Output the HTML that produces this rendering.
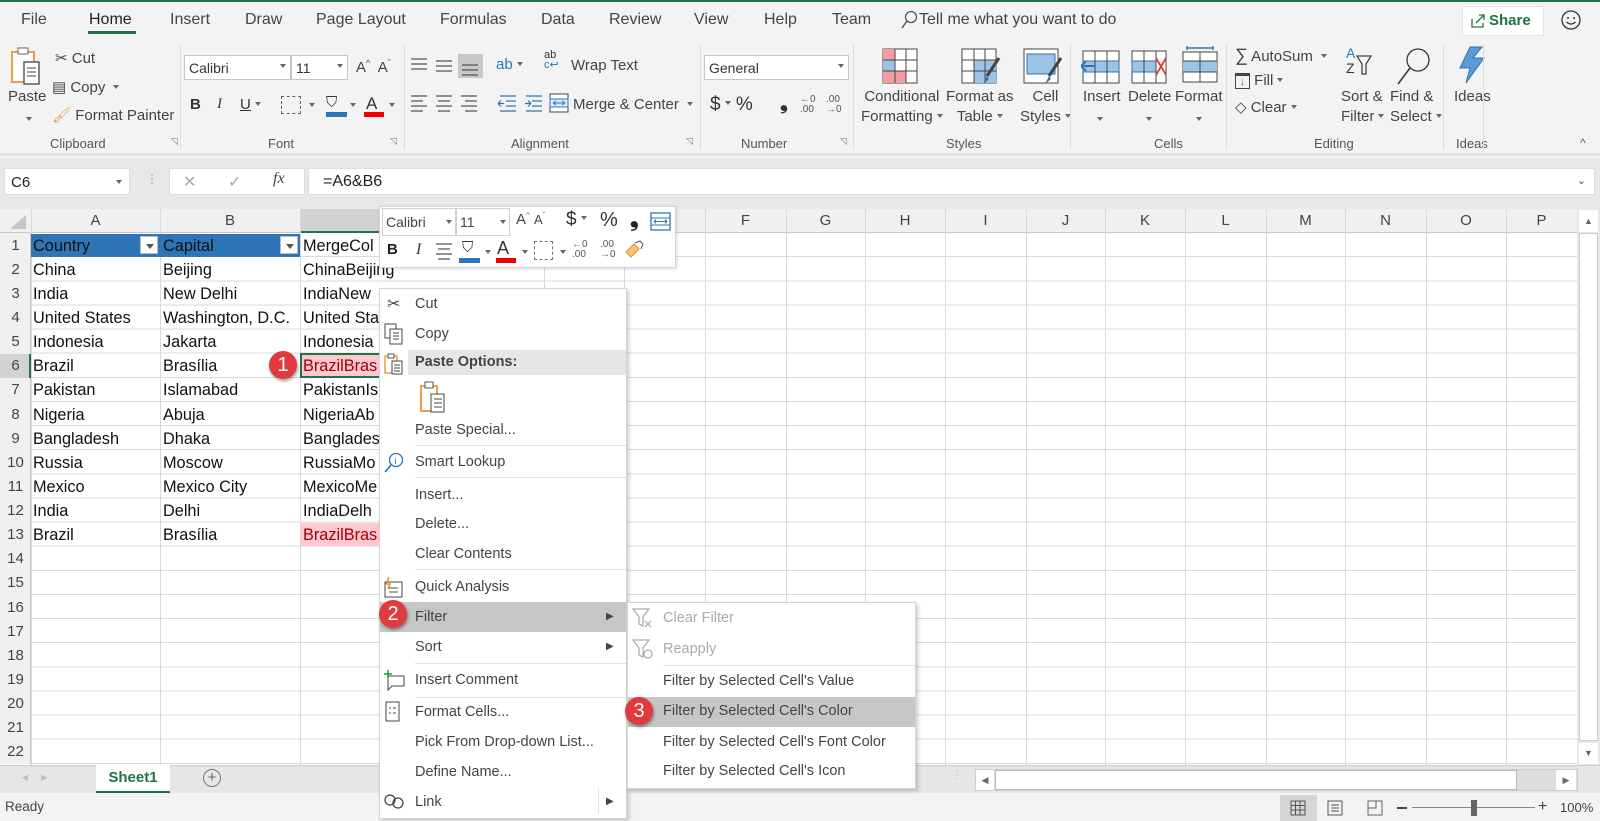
<!DOCTYPE html>
<html><head><meta charset="utf-8"><style>
*{box-sizing:border-box;margin:0;padding:0}
body{width:1600px;height:821px;overflow:hidden;background:#e8e8e8;font-family:"Liberation Sans",sans-serif;position:relative;color:#444}
.a{position:absolute;white-space:nowrap}
.rb{font-size:14px;color:#444}
.gl{font-size:13px;color:#555}
.vl{position:absolute;top:209px;height:556px;width:1px;background:#d9d9d9}
.c{position:absolute;font-size:16.3px;color:#111;white-space:nowrap;line-height:24px}
.rh{position:absolute;left:0;width:31px;text-align:center;font-size:15px;color:#444;line-height:24px}
.ch{position:absolute;top:209px;height:24px;line-height:24px;text-align:center;font-size:15px;color:#444}
.mi{position:absolute;left:415px;font-size:14.5px;color:#444;line-height:20px}
.si{position:absolute;left:663px;font-size:14.5px;color:#444;line-height:20px}
.sep{position:absolute;height:1px;background:#e1e1e1}
.bd{position:absolute;width:28px;height:28px;border-radius:50%;background:#e0393e;color:#fff;font-size:20px;text-align:center;line-height:28px;box-shadow:1px 2px 3px rgba(0,0,0,.4)}
.dd{position:absolute;width:18px;height:18px;background:#fff;border:1px solid #bbb}
.dd:after{content:"";position:absolute;left:5px;top:7px;border:4px solid transparent;border-top:5px solid #555}
.car{display:inline-block;border:3px solid transparent;border-top:4px solid #666;vertical-align:middle;margin-left:4px}
.sv{position:absolute}
.tb{font-size:16px}
</style></head><body>
<div class="a" style="left:0;top:0;width:1600px;height:158px;background:#f3f3f3"></div>
<div class="a" style="left:0;top:0;width:1600px;height:2px;background:#217346"></div>
<div class="a" style="left:0;top:153px;width:1600px;height:3px;background:linear-gradient(#ddd,#e8e8e8)"></div>
<div class="a rb tb" style="top:11px;left:21px">File</div>
<div class="a rb tb" style="top:11px;left:89px;color:#222">Home</div>
<div class="a" style="top:31px;left:88px;width:48px;height:3px;background:#217346"></div>
<div class="a rb tb" style="top:11px;left:170px">Insert</div>
<div class="a rb tb" style="top:11px;left:245px">Draw</div>
<div class="a rb tb" style="top:11px;left:316px">Page Layout</div>
<div class="a rb tb" style="top:11px;left:440px">Formulas</div>
<div class="a rb tb" style="top:11px;left:541px">Data</div>
<div class="a rb tb" style="top:11px;left:609px">Review</div>
<div class="a rb tb" style="top:11px;left:694px">View</div>
<div class="a rb tb" style="top:11px;left:764px">Help</div>
<div class="a rb tb" style="top:11px;left:832px">Team</div>
<svg class="sv" style="left:900px;top:10px" width="18" height="20"><circle cx="11" cy="7" r="5.5" fill="none" stroke="#555" stroke-width="1.3"/><line x1="7" y1="11" x2="2" y2="18" stroke="#555" stroke-width="1.5"/></svg>
<div class="a rb tb" style="top:11px;left:919px">Tell me what you want to do</div>
<div class="a" style="left:1462px;top:6px;width:82px;height:30px;background:#fff;border:1px solid #e3e3e3"></div>
<svg class="sv" style="left:1470px;top:13px" width="16" height="16"><path d="M2 6v8h11v-4M6 10l8-8M9 2h5v5" fill="none" stroke="#217346" stroke-width="1.3"/></svg>
<div class="a" style="top:12px;left:1489px;font-size:15px;font-weight:bold;color:#217346">Share</div>
<svg class="sv" style="left:1560px;top:9px" width="22" height="22"><circle cx="11" cy="11" r="9" fill="none" stroke="#333" stroke-width="1.3"/><circle cx="8" cy="9" r="1" fill="#333"/><circle cx="14" cy="9" r="1" fill="#333"/><path d="M6.5 13q4.5 4 9 0" fill="none" stroke="#333" stroke-width="1.2"/></svg>

<svg class="sv" style="left:10px;top:46px" width="36" height="42"><rect x="2" y="6" width="22" height="30" fill="#fff" stroke="#e8a04a" stroke-width="2"/><rect x="8" y="2" width="10" height="6" fill="#fff" stroke="#666"/><rect x="14" y="16" width="15" height="22" fill="#fff" stroke="#444" stroke-width="1.3"/><path d="M17 22h9M17 26h9M17 30h9" stroke="#444"/></svg>
<div class="a rb" style="left:8px;top:88px;font-size:15px">Paste</div>
<div class="a" style="left:22px;top:112px"><span class="car"></span></div>
<div class="a rb" style="left:55px;top:49px;font-size:15px">✂&nbsp;Cut</div>
<div class="a rb" style="left:52px;top:78px;font-size:15px">▤ Copy<span class="car" style="margin-left:8px"></span></div>
<div class="a rb" style="left:52px;top:106px;font-size:15px"><span style="color:#e8a04a">🖌</span> Format Painter</div>
<div class="a gl" style="left:50px;top:136px">Clipboard</div>
<div class="a" style="left:171px;top:136px;font-size:9px;color:#777">◹</div>
<div class="a" style="left:180px;top:44px;width:1px;height:106px;background:#ddd"></div>
<div class="a" style="left:184px;top:55px;width:107px;height:25px;background:#fff;border:1px solid #c6c6c6;font-size:14px;padding:4px 4px;color:#333">Calibri<span class="car" style="position:absolute;right:4px;top:8px"></span></div>
<div class="a" style="left:291px;top:55px;width:57px;height:25px;background:#fff;border:1px solid #c6c6c6;font-size:14px;padding:4px 4px;color:#333">11<span class="car" style="position:absolute;right:4px;top:8px"></span></div>
<div class="a rb" style="left:356px;top:58px;font-size:15px">A<sup style="font-size:9px">^</sup>&nbsp; A<sup style="font-size:9px">ˇ</sup></div>
<div class="a" style="left:190px;top:96px;font-size:15px;font-weight:bold;color:#333">B</div>
<div class="a" style="left:217px;top:96px;font-size:15px;font-style:italic;font-family:'Liberation Serif';color:#333">I</div>
<div class="a" style="left:240px;top:96px;font-size:15px;text-decoration:underline;color:#333">U<span class="car"></span></div>
<div class="a" style="left:281px;top:96px;width:20px;height:18px;border:1px dashed #666"></div><div class="a" style="left:305px;top:98px"><span class="car"></span></div>
<div class="a" style="left:326px;top:94px;font-size:15px;color:#333">⛉</div><div class="a" style="left:326px;top:112px;width:21px;height:5px;background:#2e75b6"></div><div class="a" style="left:346px;top:98px"><span class="car"></span></div>
<div class="a" style="left:366px;top:94px;font-size:17px;color:#333">A</div><div class="a" style="left:364px;top:112px;width:20px;height:5px;background:#e00"></div><div class="a" style="left:385px;top:98px"><span class="car"></span></div>
<div class="a gl" style="left:268px;top:136px">Font</div>
<div class="a" style="left:390px;top:136px;font-size:9px;color:#777">◹</div>
<div class="a" style="left:404px;top:44px;width:1px;height:106px;background:#ddd"></div>
<svg class="sv" style="left:408px;top:54px" width="80" height="24"><path d="M3 5h16M3 10h16M3 15h16M28 7h16M28 12h16M28 17h16" stroke="#555" stroke-width="1.3"/><rect x="50" y="0" width="25" height="24" fill="#c8c8c8"/><path d="M54 11h16M54 16h16M54 21h16" stroke="#555" stroke-width="1.3"/></svg>
<svg class="sv" style="left:408px;top:93px" width="160" height="22"><path d="M3 3h16M3 8h12M3 13h16M3 18h12M28 3h16M30 8h12M28 13h16M30 18h12M53 3h16M57 8h12M53 13h16M57 18h12" stroke="#555" stroke-width="1.3"/><path d="M92 3h16M98 8h10M98 13h10M92 18h16M90 10.5h6M90 10.5l3-3M90 10.5l3 3" stroke="#2e75b6" stroke-width="1.2" fill="none"/><path d="M118 3h16M124 8h10M124 13h10M118 18h16M117 10.5h6M123 10.5l-3-3M123 10.5l-3 3" stroke="#2e75b6" stroke-width="1.2" fill="none"/></svg>
<div class="a" style="left:496px;top:56px;font-size:15px;color:#2e75b6">ab<span class="car"></span></div>
<div class="a" style="left:544px;top:50px;font-size:11px;color:#333;line-height:10px">ab<br><span style="color:#2e75b6">c↩</span></div>
<div class="a rb" style="left:571px;top:57px;font-size:15px">Wrap Text</div>
<svg class="sv" style="left:549px;top:93px" width="20" height="20"><rect x="1" y="1" width="18" height="18" fill="#fff" stroke="#444"/><rect x="1" y="6" width="18" height="8" fill="#dce9f7" stroke="#2e75b6"/><path d="M4 10h12M4 10l3-2M4 10l3 2M16 10l-3-2M16 10l-3 2" stroke="#2e75b6"/></svg>
<div class="a rb" style="left:573px;top:96px;font-size:15px">Merge &amp; Center<span class="car" style="margin-left:8px"></span></div>
<div class="a gl" style="left:511px;top:136px">Alignment</div>
<div class="a" style="left:686px;top:136px;font-size:9px;color:#777">◹</div>
<div class="a" style="left:700px;top:44px;width:1px;height:106px;background:#ddd"></div>
<div class="a" style="left:704px;top:55px;width:145px;height:25px;background:#fff;border:1px solid #c6c6c6;font-size:14px;padding:4px 4px;color:#333">General<span class="car" style="position:absolute;right:4px;top:8px"></span></div>
<div class="a" style="left:710px;top:94px;font-size:19px;color:#333">$<span class="car"></span> %</div>
<div class="a" style="left:780px;top:92px;font-size:20px;font-weight:bold;color:#333">❟</div>
<div class="a" style="left:800px;top:95px;font-size:10px;line-height:10px;color:#2e75b6">←<span style="color:#555">0</span><br><span style="color:#555">.00</span></div>
<div class="a" style="left:826px;top:95px;font-size:10px;line-height:10px;color:#555">.00<br><span style="color:#2e75b6">→</span>0</div>
<div class="a gl" style="left:741px;top:136px">Number</div>
<div class="a" style="left:840px;top:136px;font-size:9px;color:#777">◹</div>
<div class="a" style="left:853px;top:44px;width:1px;height:106px;background:#ddd"></div>
<svg class="sv" style="left:882px;top:48px" width="36" height="36"><rect x="1" y="1" width="34" height="34" fill="#fff" stroke="#444"/><rect x="1" y="1" width="12" height="11" fill="#f59ca2"/><rect x="1" y="23" width="23" height="12" fill="#f59ca2"/><rect x="1" y="12" width="12" height="11" fill="#9cc3e6"/><path d="M1 12h34M1 23h34M13 1v34M24 1v34" stroke="#444"/></svg>
<svg class="sv" style="left:961px;top:48px" width="40" height="40"><rect x="1" y="1" width="34" height="34" fill="#fff" stroke="#444"/><rect x="13" y="12" width="22" height="23" fill="#9cc3e6"/><path d="M1 12h34M1 23h34M13 1v34M24 1v34" stroke="#444"/><path d="M38 10l-12 18" stroke="#444" stroke-width="3"/><path d="M26 28l-4 8 6-5z" fill="#2e75b6"/></svg>
<svg class="sv" style="left:1023px;top:48px" width="40" height="40"><rect x="1" y="1" width="34" height="34" fill="#fff" stroke="#444"/><rect x="4" y="6" width="28" height="20" fill="#9cc3e6" stroke="#2e75b6"/><path d="M38 10l-12 18" stroke="#444" stroke-width="3"/><path d="M26 28l-4 8 6-5z" fill="#2e75b6"/></svg>
<div class="a rb" style="left:861px;top:87px;font-size:15px;text-align:center;line-height:20px">Conditional<br>Formatting<span class="car"></span></div>
<div class="a rb" style="left:946px;top:87px;font-size:15px;text-align:center;line-height:20px">Format as<br>Table<span class="car"></span></div>
<div class="a rb" style="left:1020px;top:87px;font-size:15px;text-align:center;line-height:20px">Cell<br>Styles<span class="car"></span></div>
<div class="a gl" style="left:946px;top:136px">Styles</div>
<div class="a" style="left:1070px;top:44px;width:1px;height:106px;background:#ddd"></div>
<svg class="sv" style="left:1081px;top:50px" width="40" height="34"><rect x="2" y="1" width="36" height="32" fill="#fff" stroke="#444"/><rect x="2" y="11" width="36" height="11" fill="#9cc3e6" stroke="#2e75b6"/><path d="M14 1v32M26 1v32" stroke="#444"/><path d="M0 16h14M5 11l-5 5 5 5" fill="none" stroke="#2e75b6" stroke-width="2"/></svg>
<svg class="sv" style="left:1130px;top:50px" width="40" height="34"><rect x="2" y="1" width="34" height="32" fill="#fff" stroke="#444"/><rect x="2" y="11" width="24" height="11" fill="#9cc3e6" stroke="#2e75b6"/><path d="M14 1v32M26 1v32" stroke="#444"/><path d="M26 8l10 17M36 8l-10 17" stroke="#e0393e" stroke-width="1.8"/></svg>
<svg class="sv" style="left:1181px;top:46px" width="38" height="38"><path d="M6 2h26M6 0v4M32 0v4" stroke="#2e75b6" stroke-width="1.5"/><rect x="2" y="6" width="34" height="30" fill="#fff" stroke="#444"/><rect x="2" y="15" width="34" height="11" fill="#9cc3e6"/><path d="M2 15h34M2 26h34M19 6v30" stroke="#444"/></svg>
<div class="a rb" style="left:1083px;top:88px;font-size:15px">Insert</div><div class="a" style="left:1093px;top:112px"><span class="car"></span></div>
<div class="a rb" style="left:1128px;top:88px;font-size:15px">Delete</div><div class="a" style="left:1142px;top:112px"><span class="car"></span></div>
<div class="a rb" style="left:1175px;top:88px;font-size:15px">Format</div><div class="a" style="left:1192px;top:112px"><span class="car"></span></div>
<div class="a gl" style="left:1154px;top:136px">Cells</div>
<div class="a" style="left:1226px;top:44px;width:1px;height:106px;background:#ddd"></div>
<div class="a rb" style="left:1235px;top:45px;font-size:15px"><span style="font-size:18px">∑</span> AutoSum<span class="car" style="margin-left:8px"></span></div>
<div class="a rb" style="left:1235px;top:72px;font-size:15px"><span style="display:inline-block;width:15px;height:16px;border:1px solid #444;border-top:3px solid #444;color:#2e75b6;font-size:11px;text-align:center;line-height:12px;vertical-align:middle">↓</span> Fill<span class="car"></span></div>
<div class="a rb" style="left:1235px;top:98px;font-size:15px">◇ Clear<span class="car"></span></div>
<div class="a" style="left:1346px;top:46px;font-size:14px;line-height:15px;color:#2e75b6">A<br><span style="color:#333">Z</span></div>
<svg class="sv" style="left:1356px;top:54px" width="16" height="22"><path d="M1 2h14l-5 8v10h-4V10z" fill="none" stroke="#444" stroke-width="1.3"/></svg>
<svg class="sv" style="left:1394px;top:46px" width="40" height="40"><circle cx="24" cy="14" r="11" fill="none" stroke="#333" stroke-width="1.3"/><path d="M16 22L4 38" stroke="#333" stroke-width="1.5"/></svg>
<div class="a rb" style="left:1341px;top:87px;font-size:15px;line-height:20px">Sort &amp;<br>Filter<span class="car"></span></div>
<div class="a rb" style="left:1390px;top:87px;font-size:15px;line-height:20px">Find &amp;<br>Select<span class="car"></span></div>
<div class="a gl" style="left:1314px;top:136px">Editing</div>
<div class="a" style="left:1443px;top:44px;width:1px;height:106px;background:#ddd"></div>
<svg class="sv" style="left:1458px;top:46px" width="28" height="38"><path d="M12 1L2 22h10L8 37 26 12H15L24 1z" fill="#5b9bd5" stroke="#2e75b6"/></svg>
<div class="a rb" style="left:1454px;top:88px;font-size:15px">Ideas</div>
<div class="a gl" style="left:1456px;top:136px">Ideas</div>
<div class="a" style="left:1483px;top:44px;width:1px;height:106px;background:#ddd"></div>
<div class="a" style="left:1580px;top:136px;font-size:12px;color:#555">^</div>

<div class="a" style="left:4px;top:168px;width:126px;height:27px;background:#fff;border:1px solid #ddd;font-size:15px;padding:5px 6px;color:#222">C6<span class="car" style="position:absolute;right:7px;top:11px"></span></div>
<div class="a" style="left:146px;top:172px;font-size:12px;color:#aaa">⋮</div>
<div class="a" style="left:169px;top:168px;width:136px;height:27px;background:#fff;border:1px solid #ddd"></div>
<div class="a" style="left:183px;top:172px;font-size:16px;color:#aaa">✕</div>
<div class="a" style="left:228px;top:172px;font-size:16px;color:#aaa">✓</div>
<div class="a" style="left:273px;top:170px;font-size:16px;font-style:italic;font-family:'Liberation Serif';color:#444">fx</div>
<div class="a" style="left:308px;top:168px;width:1287px;height:27px;background:#fff;border:1px solid #ddd;font-size:16px;padding:4px 14px;color:#222">=A6&amp;B6<span style="position:absolute;right:8px;top:5px;font-size:11px;color:#555">⌄</span></div>

<div class="a" style="left:0;top:209px;width:1577px;height:556px;background:#fff"></div>
<div class="a" style="left:0;top:209px;width:1577px;height:24px;background:#f0f0f0;border-bottom:1px solid #c8c8c8"></div>
<div class="a" style="left:0;top:233px;width:31px;height:531px;background:#f0f0f0;border-right:1px solid #c8c8c8"></div>
<div class="a" style="left:31px;top:233px;width:1546px;height:531px;background:repeating-linear-gradient(to bottom,transparent 0,transparent 23.13px,#dadada 23.13px,#dadada 24.13px)"></div>
<svg class="sv" style="left:6px;top:213px" width="22" height="18"><path d="M20 2V16H4z" fill="#c6c6c6"/></svg>
<div class="a" style="left:300px;top:209px;width:244px;height:24px;background:#d2d2d2;border-bottom:2px solid #217346"></div>
<div class="a" style="left:0;top:354px;width:31px;height:24px;background:#d2d2d2;border-right:2px solid #217346"></div>
<div class="vl" style="left:31px"></div><div class="vl" style="left:160px"></div><div class="vl" style="left:300px"></div><div class="vl" style="left:544px"></div><div class="vl" style="left:624px"></div><div class="vl" style="left:705px"></div><div class="vl" style="left:786px"></div><div class="vl" style="left:865px"></div><div class="vl" style="left:945px"></div><div class="vl" style="left:1026px"></div><div class="vl" style="left:1105px"></div><div class="vl" style="left:1185px"></div><div class="vl" style="left:1266px"></div><div class="vl" style="left:1345px"></div><div class="vl" style="left:1426px"></div><div class="vl" style="left:1506px"></div>
<div class="ch" style="left:31px;width:129px">A</div><div class="ch" style="left:160px;width:140px">B</div><div class="ch" style="left:544px;width:80px">D</div><div class="ch" style="left:624px;width:81px">E</div><div class="ch" style="left:705px;width:81px">F</div><div class="ch" style="left:786px;width:79px">G</div><div class="ch" style="left:865px;width:80px">H</div><div class="ch" style="left:945px;width:81px">I</div><div class="ch" style="left:1026px;width:79px">J</div><div class="ch" style="left:1105px;width:80px">K</div><div class="ch" style="left:1185px;width:81px">L</div><div class="ch" style="left:1266px;width:79px">M</div><div class="ch" style="left:1345px;width:81px">N</div><div class="ch" style="left:1426px;width:80px">O</div><div class="ch" style="left:1506px;width:71px">P</div>
<div class="rh" style="top:233.6px">1</div><div class="rh" style="top:257.7px">2</div><div class="rh" style="top:281.9px">3</div><div class="rh" style="top:306px">4</div><div class="rh" style="top:330.1px">5</div><div class="rh" style="top:354.3px">6</div><div class="rh" style="top:378.4px">7</div><div class="rh" style="top:402.5px">8</div><div class="rh" style="top:426.6px">9</div><div class="rh" style="top:450.8px">10</div><div class="rh" style="top:474.9px">11</div><div class="rh" style="top:499px">12</div><div class="rh" style="top:523.2px">13</div><div class="rh" style="top:547.3px">14</div><div class="rh" style="top:571.4px">15</div><div class="rh" style="top:595.6px">16</div><div class="rh" style="top:619.7px">17</div><div class="rh" style="top:643.8px">18</div><div class="rh" style="top:668px">19</div><div class="rh" style="top:692.1px">20</div><div class="rh" style="top:716.2px">21</div><div class="rh" style="top:740.4px">22</div>
<div class="a" style="left:31px;top:233.6px;width:269px;height:23px;background:#2e75b6"></div>
<div class="dd" style="left:140px;top:236px"></div><div class="dd" style="left:280px;top:236px"></div>
<div class="a" style="left:300px;top:354.3px;width:244px;height:23px;background:#ffc7ce"></div>
<div class="a" style="left:300px;top:523.2px;width:244px;height:23px;background:#ffc7ce"></div>
<div class="a" style="left:300px;top:353.3px;width:90px;height:25px;border:2px solid #217346"></div>
<div class="c" style="left:33px;top:233.6px">Country</div><div class="c" style="left:163px;top:233.6px">Capital</div><div class="c" style="left:303px;top:233.6px">MergeCol</div>
<div class="c" style="left:33px;top:257.7px">China</div><div class="c" style="left:163px;top:257.7px">Beijing</div><div class="c" style="left:303px;top:257.7px">ChinaBeijing</div>
<div class="c" style="left:33px;top:281.9px">India</div><div class="c" style="left:163px;top:281.9px">New Delhi</div><div class="c" style="left:303px;top:281.9px">IndiaNew</div>
<div class="c" style="left:33px;top:306px">United States</div><div class="c" style="left:163px;top:306px">Washington, D.C.</div><div class="c" style="left:303px;top:306px">United Sta</div>
<div class="c" style="left:33px;top:330.1px">Indonesia</div><div class="c" style="left:163px;top:330.1px">Jakarta</div><div class="c" style="left:303px;top:330.1px">Indonesia</div>
<div class="c" style="left:33px;top:354.3px">Brazil</div><div class="c" style="left:163px;top:354.3px">Brasília</div><div class="c" style="left:303px;top:354.3px;color:#9c0006">BrazilBras</div>
<div class="c" style="left:33px;top:378.4px">Pakistan</div><div class="c" style="left:163px;top:378.4px">Islamabad</div><div class="c" style="left:303px;top:378.4px">PakistanIs</div>
<div class="c" style="left:33px;top:402.5px">Nigeria</div><div class="c" style="left:163px;top:402.5px">Abuja</div><div class="c" style="left:303px;top:402.5px">NigeriaAb</div>
<div class="c" style="left:33px;top:426.6px">Bangladesh</div><div class="c" style="left:163px;top:426.6px">Dhaka</div><div class="c" style="left:303px;top:426.6px">Banglades</div>
<div class="c" style="left:33px;top:450.8px">Russia</div><div class="c" style="left:163px;top:450.8px">Moscow</div><div class="c" style="left:303px;top:450.8px">RussiaMo</div>
<div class="c" style="left:33px;top:474.9px">Mexico</div><div class="c" style="left:163px;top:474.9px">Mexico City</div><div class="c" style="left:303px;top:474.9px">MexicoMe</div>
<div class="c" style="left:33px;top:499px">India</div><div class="c" style="left:163px;top:499px">Delhi</div><div class="c" style="left:303px;top:499px">IndiaDelh</div>
<div class="c" style="left:33px;top:523.2px">Brazil</div><div class="c" style="left:163px;top:523.2px">Brasília</div><div class="c" style="left:303px;top:523.2px;color:#9c0006">BrazilBras</div>
<div class="a" style="left:1577px;top:209px;width:23px;height:556px;background:#e8e8e8"></div>
<div class="a" style="left:1579px;top:210px;width:19px;height:22px;background:#fff;font-size:9px;text-align:center;line-height:22px;color:#666">▲</div>
<div class="a" style="left:1579px;top:233px;width:19px;height:508px;background:#fff;border:1px solid #ccc"></div>
<div class="a" style="left:1579px;top:743px;width:19px;height:21px;background:#fff;font-size:9px;text-align:center;line-height:21px;color:#666">▼</div>

<div class="a" style="left:0;top:765px;width:1600px;height:28px;background:#e6e6e6;border-top:1px solid #ccc"></div>
<div class="a" style="left:22px;top:770px;font-size:12px;color:#bbb">◂ &nbsp;&nbsp; ▸</div>
<div class="a" style="left:96px;top:765px;width:74px;height:28px;background:#fff;border-bottom:2px solid #217346;font-size:15px;font-weight:bold;color:#217346;text-align:center;line-height:26px">Sheet1</div>
<div class="a" style="left:203px;top:769px;width:18px;height:18px;border:1px solid #777;border-radius:50%;text-align:center;font-size:15px;line-height:16px;color:#666">+</div>
<div class="a" style="left:952px;top:770px;font-size:10px;color:#aaa">⋮</div>
<div class="a" style="left:975px;top:769px;width:603px;height:22px;background:#ddd;border:1px solid #ccc"></div>
<div class="a" style="left:976px;top:770px;width:18px;height:20px;background:#fff;font-size:9px;color:#666;line-height:20px;text-align:center">◀</div>
<div class="a" style="left:995px;top:770px;width:522px;height:20px;background:#fff;border:1px solid #bbb"></div>
<div class="a" style="left:1556px;top:770px;width:20px;height:20px;background:#fff;font-size:9px;color:#666;line-height:20px;text-align:center">▶</div>
<div class="a" style="left:0;top:793px;width:1600px;height:28px;background:#f3f3f3"></div>
<div class="a" style="left:5px;top:799px;font-size:13.5px;color:#444">Ready</div>
<div class="a" style="left:1280px;top:795px;width:37px;height:26px;background:#d6d6d6"></div>
<svg class="sv" style="left:1290px;top:800px" width="120" height="16"><path d="M1 1h14v14H1zM1 5.5h14M1 10h14M5.5 1v14M10 1v14" fill="none" stroke="#555"/><rect x="38" y="1" width="14" height="14" fill="none" stroke="#555"/><path d="M41 5h8M41 8h8M41 11h8" stroke="#555"/><path d="M78 1h14v14H78zM78 8h8V1" fill="none" stroke="#666"/></svg>
<div class="a" style="left:1397px;top:807px;width:10px;height:2px;background:#444"></div>
<div class="a" style="left:1412px;top:807px;width:123px;height:1px;background:#888"></div>
<div class="a" style="left:1471px;top:800px;width:6px;height:16px;background:#666"></div>
<div class="a" style="left:1538px;top:798px;font-size:16px;color:#444">+</div>
<div class="a" style="left:1560px;top:800px;font-size:13px;color:#444">100%</div>

<div class="a" style="left:379px;top:206px;width:297px;height:62px;background:#fff;border:1px solid #d4d4d4;box-shadow:1px 1px 3px rgba(0,0,0,.15)"></div>
<div class="a" style="left:382px;top:208px;width:74px;height:28px;border:1px solid #d0d0d0;font-size:14px;padding:5px 3px;color:#444">Calibri<span class="car" style="position:absolute;right:3px;top:11px"></span></div>
<div class="a" style="left:456px;top:208px;width:54px;height:28px;border:1px solid #d0d0d0;font-size:14px;padding:5px 3px;color:#444">11<span class="car" style="position:absolute;right:3px;top:11px"></span></div>
<div class="a" style="left:516px;top:211px;font-size:15px;color:#444">A<sup style="font-size:8px;color:#2e75b6">^</sup> <span style="font-size:13px">A</span><sup style="font-size:8px;color:#2e75b6">ˇ</sup></div>
<div class="a" style="left:566px;top:209px;font-size:19px;color:#333">$<span class="car"></span></div>
<div class="a" style="left:600px;top:209px;font-size:20px;color:#333">%</div>
<div class="a" style="left:630px;top:206px;font-size:22px;font-weight:bold;color:#222">❟</div>
<svg class="sv" style="left:650px;top:212px" width="22" height="20"><rect x="1" y="1" width="19" height="17" fill="#fff" stroke="#2e75b6" stroke-width="1.3"/><path d="M1 6h19M1 13h19" stroke="#2e75b6"/><path d="M4 9.5h13M4 9.5l2-2M4 9.5l2 2M17 9.5l-2-2M17 9.5l-2 2" stroke="#2e75b6"/></svg>
<div class="a" style="left:387px;top:241px;font-size:15px;font-weight:bold;color:#222">B</div>
<div class="a" style="left:416px;top:241px;font-size:16px;font-style:italic;font-family:'Liberation Serif';color:#333">I</div>
<svg class="sv" style="left:435px;top:242px" width="18" height="18"><path d="M1 2h16M3 7h12M1 12h16M3 17h12" stroke="#555" stroke-width="1.3"/></svg>
<div class="a" style="left:462px;top:239px;font-size:15px;color:#333">⛉</div><div class="a" style="left:459px;top:258px;width:21px;height:5px;background:#2e75b6"></div><div class="a" style="left:481px;top:245px"><span class="car"></span></div>
<div class="a" style="left:497px;top:238px;font-size:18px;color:#333">A</div><div class="a" style="left:496px;top:258px;width:20px;height:5px;background:#e00"></div><div class="a" style="left:518px;top:245px"><span class="car"></span></div>
<div class="a" style="left:534px;top:241px;width:19px;height:19px;border:1px dashed #777"></div><div class="a" style="left:556px;top:245px"><span class="car"></span></div>
<div class="a" style="left:572px;top:240px;font-size:10px;line-height:10px;color:#2e75b6">←<span style="color:#555">0</span><br><span style="color:#555">.00</span></div>
<div class="a" style="left:600px;top:240px;font-size:10px;line-height:10px;color:#555">.00<br><span style="color:#2e75b6">→</span>0</div>
<svg class="sv" style="left:624px;top:240px" width="20" height="20"><path d="M2 12l8-8 5 5-8 8z" fill="#f8c27a" stroke="#e88a2a"/><path d="M11 3l5-2 3 3-2 5" fill="none" stroke="#555"/></svg>

<div class="a" style="left:379px;top:288px;width:248px;height:531px;background:#fff;border:1px solid #d4d4d4;box-shadow:2px 2px 4px rgba(0,0,0,.2)"></div>
<div class="a" style="left:408px;top:350px;width:218px;height:25px;background:#e6e6e6"></div>
<div class="a" style="left:380px;top:602px;width:246px;height:30px;background:#c6c6c6"></div>
<div class="a" style="left:387px;top:294px;font-size:16px;color:#444">✂</div>
<svg class="sv" style="left:384px;top:323px" width="20" height="22"><rect x="1" y="1" width="11" height="14" fill="#fff" stroke="#444"/><rect x="6" y="6" width="12" height="15" fill="#fff" stroke="#444"/><path d="M9 10h6M9 13h6M9 16h6" stroke="#444"/></svg>
<svg class="sv" style="left:384px;top:353px" width="20" height="22"><rect x="1" y="3" width="12" height="17" fill="#fff" stroke="#e8a04a" stroke-width="1.5"/><rect x="4" y="1" width="6" height="4" fill="#fff" stroke="#555"/><rect x="8" y="8" width="10" height="13" fill="#fff" stroke="#444"/><path d="M10 12h6M10 15h6M10 18h6" stroke="#444"/></svg>
<svg class="sv" style="left:420px;top:381px" width="26" height="32"><rect x="1" y="5" width="16" height="25" fill="#fff" stroke="#e8a04a" stroke-width="2"/><rect x="5" y="1" width="8" height="6" fill="#fff" stroke="#555"/><rect x="11" y="13" width="13" height="18" fill="#fff" stroke="#444"/><path d="M14 18h8M14 22h8M14 26h8" stroke="#444"/></svg>
<svg class="sv" style="left:383px;top:452px" width="22" height="22"><circle cx="13" cy="8" r="6.5" fill="none" stroke="#2e75b6" stroke-width="1.3"/><path d="M8 13L2 20" stroke="#2e75b6" stroke-width="1.6"/><text x="11.5" y="12" font-size="9" fill="#2e75b6" font-family="Liberation Sans">i</text></svg>
<svg class="sv" style="left:383px;top:576px" width="22" height="22"><rect x="2" y="6" width="17" height="15" fill="#fff" stroke="#444"/><path d="M6 12h9M6 16h9" stroke="#444"/><path d="M6 1L3 8h4l-2 5" fill="none" stroke="#e88a2a" stroke-width="1.5"/></svg>
<svg class="sv" style="left:383px;top:669px" width="22" height="22"><path d="M5 7h16v10H9l-4 4v-4H5z" fill="#fff" stroke="#444"/><path d="M5 1v8M1 5h8" stroke="#1a9c3b" stroke-width="1.5"/></svg>
<svg class="sv" style="left:385px;top:701px" width="16" height="22"><rect x="1" y="1" width="13" height="19" fill="#fff" stroke="#444"/><path d="M4 7h2M8 7h3M4 12h2M8 12h3" stroke="#444"/></svg>
<svg class="sv" style="left:383px;top:794px" width="24" height="16"><circle cx="7" cy="6" r="5" fill="none" stroke="#444" stroke-width="1.3"/><circle cx="15" cy="9" r="5" fill="none" stroke="#444" stroke-width="1.3"/></svg>
<div class="mi" style="top:294px">Cut</div>
<div class="mi" style="top:324px">Copy</div>
<div class="mi" style="top:352px;font-weight:bold;color:#444">Paste Options:</div>
<div class="mi" style="top:420px">Paste Special...</div>
<div class="sep" style="left:415px;top:445px;width:211px"></div>
<div class="mi" style="top:452px">Smart Lookup</div>
<div class="sep" style="left:415px;top:477px;width:211px"></div>
<div class="mi" style="top:485px">Insert...</div>
<div class="mi" style="top:514px">Delete...</div>
<div class="mi" style="top:544px">Clear Contents</div>
<div class="sep" style="left:415px;top:569px;width:211px"></div>
<div class="mi" style="top:577px">Quick Analysis</div>
<div class="mi" style="top:607px">Filter</div>
<div class="a" style="left:606px;top:611px;font-size:10px;color:#444">▶</div>
<div class="mi" style="top:637px">Sort</div>
<div class="a" style="left:606px;top:641px;font-size:10px;color:#444">▶</div>
<div class="sep" style="left:415px;top:663px;width:211px"></div>
<div class="mi" style="top:670px">Insert Comment</div>
<div class="sep" style="left:415px;top:697px;width:211px"></div>
<div class="mi" style="top:702px">Format Cells...</div>
<div class="mi" style="top:732px">Pick From Drop-down List...</div>
<div class="mi" style="top:762px">Define Name...</div>
<div class="mi" style="top:792px">Link</div>
<div class="a" style="left:598px;top:788px;width:1px;height:26px;background:#e1e1e1"></div>
<div class="a" style="left:606px;top:796px;font-size:10px;color:#444">▶</div>

<div class="a" style="left:627px;top:602px;width:289px;height:187px;background:#fff;border:1px solid #d4d4d4;box-shadow:2px 2px 4px rgba(0,0,0,.2)"></div>
<div class="a" style="left:628px;top:697px;width:287px;height:30px;background:#c6c6c6"></div>
<svg class="sv" style="left:632px;top:607px" width="22" height="22"><path d="M1 2h16l-6 8v9l-4-2v-7z" fill="none" stroke="#aaa" stroke-width="1.2"/><path d="M13 14l6 6M19 14l-6 6" stroke="#aaa" stroke-width="1.2"/></svg>
<svg class="sv" style="left:632px;top:638px" width="22" height="22"><path d="M1 2h16l-6 8v9l-4-2v-7z" fill="none" stroke="#aaa" stroke-width="1.2"/><circle cx="16" cy="16" r="4" fill="none" stroke="#aaa" stroke-width="1.2"/></svg>
<div class="si" style="top:608px;color:#aaa">Clear Filter</div>
<div class="si" style="top:639px;color:#aaa">Reapply</div>
<div class="sep" style="left:663px;top:665px;width:252px"></div>
<div class="si" style="top:671px">Filter by Selected Cell's Value</div>
<div class="si" style="top:701px">Filter by Selected Cell's Color</div>
<div class="si" style="top:732px">Filter by Selected Cell's Font Color</div>
<div class="si" style="top:761px">Filter by Selected Cell's Icon</div>

<div class="bd" style="left:269px;top:351px">1</div>
<div class="bd" style="left:379px;top:600px">2</div>
<div class="bd" style="left:625px;top:697px">3</div>
</body></html>
